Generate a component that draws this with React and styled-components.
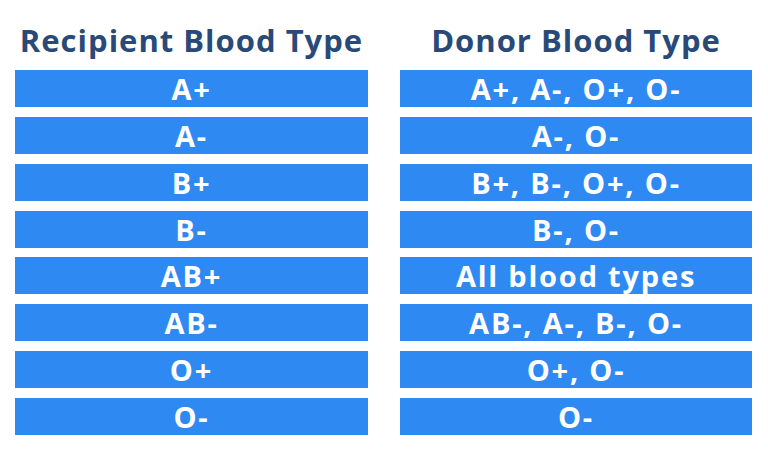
import React from 'react';
import styled, { createGlobalStyle } from 'styled-components';

const GlobalStyle = createGlobalStyle`
  html, body {
    margin: 0;
    padding: 0;
    background: #ffffff;
  }
  body {
    font-family: 'Open Sans', 'Liberation Sans', sans-serif;
  }
`;

const Page = styled.div`
  width: 768px;
  height: 461px;
  box-sizing: border-box;
  padding: 20px 16px 0 15px;
  display: grid;
  grid-template-columns: 353px 352px;
  column-gap: 32px;
  background: #ffffff;
`;

const Column = styled.div`
  display: flex;
  flex-direction: column;
`;

const Heading = styled.h2`
  margin: 0 0 10px;
  height: 40px;
  line-height: 40px;
  text-align: center;
  font-size: 31px;
  font-weight: 700;
  letter-spacing: 1px;
  color: #294a78;
  white-space: nowrap;
`;

const Rows = styled.ul`
  list-style: none;
  margin: 0;
  padding: 0;
  display: flex;
  flex-direction: column;
  gap: 9.86px;
`;

const Cell = styled.li`
  height: 37px;
  background: #2f89f2;
  color: #ffffff;
  display: flex;
  align-items: center;
  justify-content: center;
  font-size: 29px;
  font-weight: 700;
  letter-spacing: 1.8px;
  white-space: nowrap;
`;

const rows = [
  ['A+', 'A+, A-, O+, O-'],
  ['A-', 'A-, O-'],
  ['B+', 'B+, B-, O+, O-'],
  ['B-', 'B-, O-'],
  ['AB+', 'All blood types'],
  ['AB-', 'AB-, A-, B-, O-'],
  ['O+', 'O+, O-'],
  ['O-', 'O-'],
];

const App = () => (
  <>
    <GlobalStyle />
    <Page>
      <Column>
        <Heading>Recipient Blood Type</Heading>
        <Rows>
          {rows.map(([recipient]) => (
            <Cell key={recipient}>{recipient}</Cell>
          ))}
        </Rows>
      </Column>
      <Column>
        <Heading>Donor Blood Type</Heading>
        <Rows>
          {rows.map(([recipient, donor]) => (
            <Cell key={recipient}>{donor}</Cell>
          ))}
        </Rows>
      </Column>
    </Page>
  </>
);

export default App;
